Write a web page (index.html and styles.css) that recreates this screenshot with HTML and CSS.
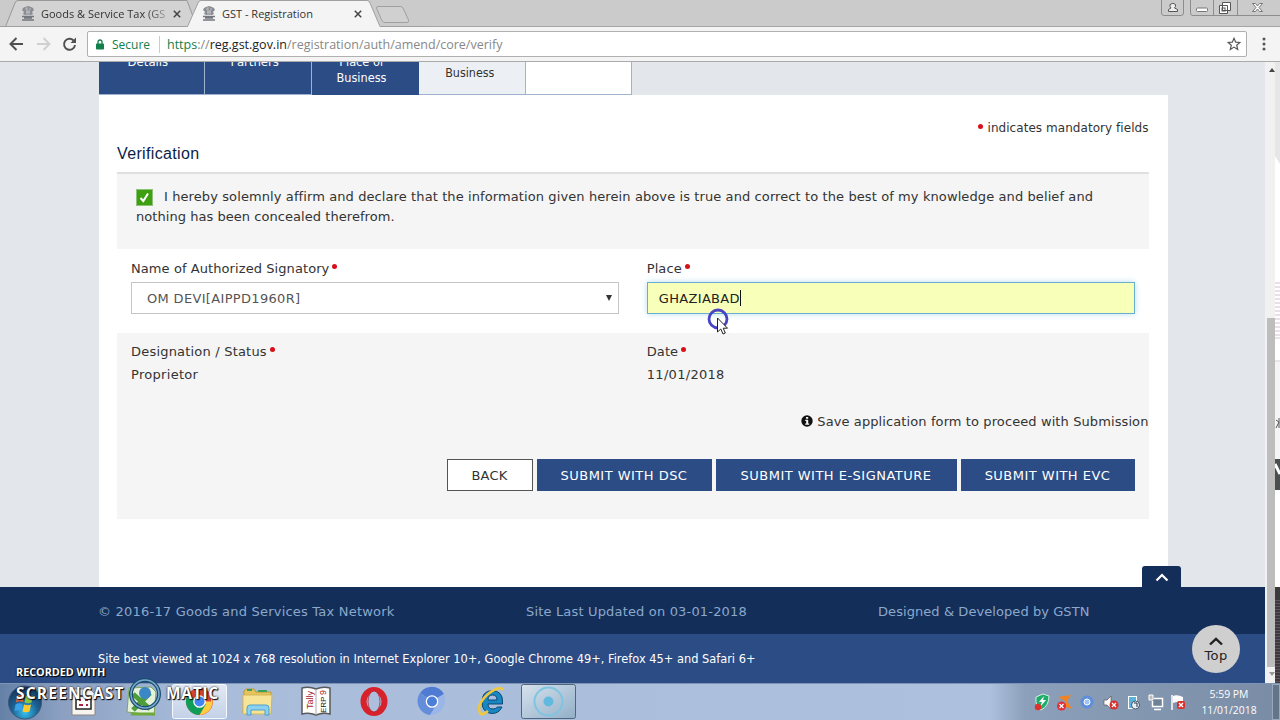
FILE: index.html
```html
<!DOCTYPE html>
<html lang="en">

<head>
    <meta charset="UTF-8" />
    <meta name="viewport" content="width=device-width, initial-scale=1.0" />
    <title>GST - Registration</title>
    <link rel="stylesheet" href="styles.css">
</head>

<body>
    <!-- shared symbols -->
    <svg class="defs" width="0" height="0">
        <symbol id="emblem" viewBox="0 0 14 15">
            <path d="M2 2 L4 1 L7 0 L10 1 L12 2 L13 4 L11 6 L12 8 L10 9 L4 9 L2 8 L3 6 L1 4 Z" fill="#8a8d93" />
            <path d="M4 3h2M8 3h2M5 6h4M6 1v8M8 4v5" stroke="#c9cbcf" stroke-width=".8" />
            <path d="M1 10.500h12M3 12h8M1 14h12" stroke="#74777d" stroke-width="1.400" />
        </symbol>
        <symbol id="close" viewBox="0 0 8 8">
            <path d="M.8 .8 L7.200 7.200 M7.200 .8 L.8 7.200" stroke="#444" stroke-width="1.500" />
        </symbol>
    </svg>

    <div class="tab-strip">
        <svg class="tab-shapes" width="430" height="27" viewBox="0 0 430 27">
            <path d="M5.500 26.500 L15 3 Q16 .5 18 .5 H187 L197 27 Z" fill="#d3d3d3" stroke="#999" />
            <path d="M0 26.500 H187.500 L198 3 Q199 .5 201 .5 H367 Q369 .5 370 3 L380 26.500 H430 V28 H0 Z" fill="#f4f4f4" stroke="#a0a0a0" />
            <path d="M376.500 8 Q376.500 6.500 378 6.500 H400 Q402 6.500 403 8 L408.500 20 Q409 22.500 407 22.500 H385 Q383 22.500 382 21 Z" fill="#d0d0d0" stroke="#a0a0a0" />
        </svg>
        <div class="tab tab-first">
            <svg class="emblem"><use href="#emblem" /></svg>
            <span class="tab-title tab-fade">Goods &amp; Service Tax (GS</span>
            <svg class="close"><use href="#close" /></svg>
        </div>
        <div class="tab tab-active">
            <svg class="emblem"><use href="#emblem" /></svg>
            <span class="tab-title">GST - Registration</span>
            <svg class="close"><use href="#close" /></svg>
        </div>
        <svg class="window-buttons" width="120" height="17" viewBox="0 0 120 17" fill="none">
            <path d="M1.500 0 V13 Q1.500 15.500 4 15.500 H21 Q23.500 15.500 23.500 13 V0 M30.500 0 V13 Q30.500 15.500 33 15.500 H120 M53.500 0 V15 M77.500 0 V15" stroke="#8d8d8d" />
            <path d="M8.500 11.500 V9.500 L11 8 Q9.500 6.500 10 4.500 Q13 2 15.500 4.500 Q16 6.500 14.500 8 L17.500 9.500 V11.500 Z" fill="#eee" stroke="#555" />
            <rect x="36.500" y="8" width="11" height="3.500" rx="1" fill="#fff" stroke="#777" />
            <path d="M62.500 2.500 h8 v8 h-8 Z M59.500 5.500 h8 v8 h-8 Z" fill="#fff" stroke="#555" />
            <rect x="62" y="8" width="3" height="3" stroke="#555" />
            <path d="M92.500 3.500 h3 l2 2.500 l2-2.500 h3 l-3.500 4 l3.500 4 h-3 l-2-2.500 l-2 2.500 h-3 l3.500-4 Z" fill="#fff" stroke="#777" />
        </svg>
    </div>

    <div class="toolbar">
        <svg class="nav-icons" width="78" height="24" viewBox="0 0 78 24" fill="none" stroke-width="2">
            <path d="M23 12 H11 M16.500 6 L10.500 12 L16.500 18" stroke="#505050" />
            <path d="M37 12 H49 M43.500 6 L49.500 12 L43.500 18" stroke="#d0d0d0" />
            <path d="M73.500 8.500 A5.500 5.500 0 1 0 75 13" stroke="#505050" />
            <path d="M76 5.500 V11 H70.500 Z" fill="#505050" />
        </svg>
        <div class="omnibox">
            <svg class="lock" width="8" height="11" viewBox="0 0 8 11"><path d="M2 5 V3 Q2 1 4 1 Q6 1 6 3 V5" fill="none" stroke="#12804a" stroke-width="1.300" /><rect y="4.500" width="8" height="6" rx=".8" fill="#12804a" /></svg>
            <span class="secure">Secure</span>
            <span class="url"><span class="scheme">https</span>://<b>reg.gst.gov.in</b>/registration/auth/amend/core/verify</span>
            <svg class="star" width="14" height="14" viewBox="0 0 14 14"><path d="M7 1.300 L8.700 5.200 L12.900 5.500 L9.700 8.200 L10.700 12.400 L7 10.100 L3.300 12.400 L4.300 8.200 L1.100 5.500 L5.300 5.200 Z" fill="none" stroke="#555" stroke-width="1.200" /></svg>
        </div>
        <svg class="menu-dots" width="4" height="14" viewBox="0 0 4 14" fill="#555"><circle cx="2" cy="2" r="1.500" /><circle cx="2" cy="7" r="1.500" /><circle cx="2" cy="12" r="1.500" /></svg>
    </div>

    <div class="viewport">
        <div class="page">
            <div class="container">
                <div class="steps">
                    <div class="step done">Details</div>
                    <div class="step done">Partners</div>
                    <div class="step done last">Place of<br>Business</div>
                    <div class="step next">Business</div>
                    <div class="step current"></div>
                </div>
                <div class="content">
                    <p class="mandatory"><i class="dot"></i>indicates mandatory fields</p>
                    <h4>Verification</h4>
                    <div class="declaration">
                        <span class="checkbox"><svg width="15" height="15" viewBox="0 0 15 15"><path d="M3.500 8 L6.300 11 L11 3.500" fill="none" stroke="#fff" stroke-width="2" /></svg></span><span class="line-one">I hereby solemnly affirm and declare that the information given herein above is true and correct to the best of my knowledge and belief and</span><br>
                        <span class="line-two">nothing has been concealed therefrom.</span>
                    </div>
                    <div class="row fields">
                        <div class="col">
                            <label>Name of Authorized Signatory<i class="dot"></i></label>
                            <div class="control select">OM DEVI[AIPPD1960R]<i class="caret"></i></div>
                        </div>
                        <div class="col">
                            <label>Place<i class="dot"></i></label>
                            <div class="control focused">GHAZIABAD<i class="cursor"></i></div>
                        </div>
                    </div>
                    <div class="summary">
                        <div class="row">
                            <div class="col">
                                <label class="spaced">Designation / Status<i class="dot"></i></label>
                                <p class="value">Proprietor</p>
                            </div>
                            <div class="col">
                                <label>Date<i class="dot"></i></label>
                                <p class="value">11/01/2018</p>
                            </div>
                        </div>
                        <p class="save-note"><svg width="12" height="12" viewBox="0 0 12 12"><circle cx="6" cy="6" r="5.700" fill="#111" /><path d="M5 2 h2.200 v1.800 H5 Z M4.200 4.800 h3 v3.700 h1 v1.300 H4.200 V8.500 h1 V6 h-1 Z" fill="#f5f5f5" /></svg><span>Save application form to proceed with Submission</span></p>
                        <div class="buttons">
                            <button class="btn back">BACK</button>
                            <button class="btn dsc">SUBMIT WITH DSC</button>
                            <button class="btn esign">SUBMIT WITH E-SIGNATURE</button>
                            <button class="btn evc">SUBMIT WITH EVC</button>
                        </div>
                    </div>
                </div>
            </div>
            <div class="footer">
                <span class="copyright">© 2016-17 Goods and Services Tax Network</span>
                <span class="updated">Site Last Updated on 03-01-2018</span>
                <span class="designed">Designed &amp; Developed by GSTN</span>
                <div class="footer-toggle"><svg width="14" height="9" viewBox="0 0 14 9"><path d="M1.500 7.500 L7 2 L12.500 7.500" fill="none" stroke="#fff" stroke-width="2.200" /></svg></div>
            </div>
            <div class="subfooter">
                <span>Site best viewed at 1024 x 768 resolution in Internet Explorer 10+, Google Chrome 49+, Firefox 45+ and Safari 6+</span>
            </div>
            <div class="to-top">
                <svg width="14" height="9" viewBox="0 0 14 9"><path d="M1 7.500 L7 1.800 L13 7.500" fill="none" stroke="#222" stroke-width="2.400" /></svg>
                <span>Top</span>
            </div>
        </div>
        <div class="scrollbar">
            <i class="arrow-up"></i>
            <i class="thumb"></i>
            <i class="arrow-down"></i>
        </div>
        <svg class="edge" width="5" height="621" viewBox="0 0 5 621" preserveAspectRatio="none">
            <rect width="5" height="621" fill="#fff" />
            <path d="M0 0 H5 V102 L0 94 Z" fill="#e6e6e6" />
            <path d="M2.500 220 V276" stroke="#eadfe6" stroke-width="5" stroke-dasharray="2 2" />
            <rect y="300" width="5" height="97" fill="#f5f5f5" />
            <path d="M0 276 H5 M0 299 H5" stroke="#d5c6ce" />
            <path d="M1 358 L4 360 L1 366 M4 356 V366" stroke="#555" fill="none" />
            <rect y="397" width="5" height="31" fill="#4a4e4d" />
            <path d="M0 402 L5 412" stroke="#fff" stroke-width="3" />
            <rect y="525" width="5" height="96" fill="#3b3b3b" />
            <path d="M2.500 538 V621" stroke="#655167" stroke-width="5" stroke-dasharray="1 2" />
        </svg>
    </div>

    <div class="taskbar">
        <svg width="600" height="37" viewBox="0 0 600 37">
            <defs>
                <radialGradient id="orb" cx=".5" cy=".8" r=".8"><stop offset="0" stop-color="#35c1ee" /><stop offset=".5" stop-color="#1c5f92" /><stop offset="1" stop-color="#173250" /></radialGradient>
                <linearGradient id="active" x2="0" y2="1"><stop offset="0" stop-color="#e2e9f4" /><stop offset="1" stop-color="#c3d1e7" /></linearGradient>
                <linearGradient id="open" x2="1" y2="1"><stop offset="0" stop-color="#d7e2ed" /><stop offset="1" stop-color="#91afc7" /></linearGradient>
            </defs>
            <!-- start orb -->
            <circle cx="25" cy="18.500" r="16.500" fill="url(#orb)" stroke="#3c5878" />
            <path d="M17 12 q4-3 7-1 l-1 7 q-4-1.500-7 .5Z" fill="#f0662f" />
            <path d="M26 11.500 q4 2 7 0 l-1.500 7 q-3 1.500-7 0Z" fill="#8cc63e" />
            <path d="M15.500 20.500 q3.500-2 7-.5 l-1 7 q-3.500-1.500-7 .5Z" fill="#3aa0e8" />
            <path d="M24 20.500 q4 1.500 7 0 l-1.500 7 q-3.500 1.500-7 0Z" fill="#fdc92c" />
            <!-- notepad -->
            <path d="M72 5 H90 L95 10 V31 H72 Z" fill="#f7f4ef" stroke="#8b8582" />
            <rect x="76" y="12" width="15" height="13" fill="#fff" stroke="#222" stroke-width="1.500" />
            <path d="M79 16h2M85 16h3M79 21h4M86 21h2" stroke="#a24" stroke-width="2" />
            <!-- spreadsheet -->
            <path d="M129 4 L151 3 L156 8 L154 31 L127 28 Z" fill="#e5f2d9" stroke="#7ba85a" />
            <path d="M133 10 L150 25 M150 9 L133 26" stroke="#4f9c3b" stroke-width="5" />
            <path d="M131 30 H155" stroke="#6fa93c" stroke-width="3" />
            <!-- chrome -->
            <rect x="172.500" y=".5" width="54" height="34" rx="2" fill="url(#active)" stroke="#f5f8fc" />
            <circle cx="199.500" cy="17.500" r="13.500" fill="#db4437" />
            <path d="M199.500 17.500 L187.800 10.750 A13.500 13.500 0 0 0 199.500 31 L206 20.500 Z" fill="#0f9d58" />
            <path d="M199.500 17.500 H211 V11 A13.500 13.500 0 0 1 199.500 31 L206 20 Z" fill="#ffcd40" />
            <circle cx="199.500" cy="17.500" r="6.300" fill="#fff" /><circle cx="199.500" cy="17.500" r="5" fill="#4285f4" />
            <!-- explorer -->
            <path d="M244 7 L246 5 H254 L256 8 H271 V29 H243 Z" fill="#e5c45b" stroke="#bb983b" />
            <path d="M247 6 h5 M258 7 h9" stroke="#3aa05b" stroke-width="2" />
            <path d="M243 11 H272 L271 30 H243 Z" fill="#f8e496" stroke="#d4b559" />
            <path d="M247 31 V24 Q247 21 250 21 H266 Q269 21 269 24 V31 H265 V26 H251 V31 Z" fill="#8bd0f1" stroke="#4ba1cd" />
            <!-- tally -->
            <path d="M302 4 Q309 2 316 5 Q323 2 330 4 V30 Q323 28 316 31 Q309 28 302 30 Z" fill="#fff" stroke="#5a5a5a" stroke-width="1.500" />
            <path d="M316 5 V31" stroke="#aaa" />
            <text class="tally-red" transform="translate(313 25) rotate(-90)">Tally</text>
            <text class="tally-black" transform="translate(326 29) rotate(-90)">ERP</text>
            <text class="tally-nine" transform="translate(326 11) rotate(-90)">9</text>
            <!-- opera -->
            <ellipse cx="374" cy="17.500" rx="10.500" ry="11.500" fill="none" stroke="#d8222b" stroke-width="6" />
            <ellipse cx="374" cy="17.500" rx="6" ry="10.500" fill="#adbfdc" stroke="#b3131d" stroke-width=".7" />
            <!-- chromium -->
            <path d="M432 17 L420 9 A14 14 0 0 1 444 10 Z" fill="#4f7cd2" />
            <path d="M432 17 L420 9 A14 14 0 0 0 430 31 L438 19 Z" fill="#638cda" />
            <path d="M432 17 L444 10 Q447 20 441 27 Q436 31 430 31 L438 19 Z" fill="#9ab6e8" />
            <circle cx="432" cy="17.500" r="6.300" fill="#fff" /><circle cx="432" cy="17.500" r="5" fill="#4b7ed8" />
            <!-- internet explorer -->
            <path d="M501 20 H488 Q488 25 493 25 Q496 25 497.500 23 H502 Q499 29.500 492 29.500 Q482 29 482 18 Q482 7 492 6.500 Q503 7 502.500 18 V20 Z M488 16 H497 Q497 11 492.500 11 Q488 11 488 16 Z" fill="#1787c4" stroke="#0d4772" fill-rule="evenodd" />
            <path d="M503 6 Q500 1 488 10 Q476 21 480 29 Q482 32 488 27" fill="none" stroke="#f0c83c" stroke-width="2.500" />
            <!-- recorder -->
            <rect x="521.500" y=".5" width="54" height="34" rx="2" fill="url(#open)" stroke="#50657f" />
            <circle cx="548.500" cy="17.500" r="14" fill="none" stroke="#7fc4e2" stroke-width="2" /><circle cx="548.500" cy="17.500" r="5" fill="#62b9df" />
        </svg>
        <svg class="tray" width="160" height="37" viewBox="0 0 160 37">
            <path d="M6 13 L13 10 L19 12 Q19 22 11 26 Q5 23 6 13Z" fill="#1fae6a" stroke="#d6eee1" /><path d="M14 12 L9 18 H12 L10 23 L16 16 H13 Z" fill="#fff" /><circle cx="8" cy="23" r="3.200" fill="#e0322c" />
            <path d="M28 13 L41 11 L37 17 L42 25 L36 23 L35 17 Z" fill="#f58220" /><circle cx="31.500" cy="22" r="4.500" fill="#df3038" /><path d="M29.500 20l4 4M33.500 20l-4 4" stroke="#fff" stroke-width="1.200" />
            <circle cx="57" cy="18" r="6.500" fill="#5f8edb" /><circle cx="57" cy="18" r="3" fill="#a0c2fa" stroke="#fff" />
            <path d="M74 16 H77 L81 12 V25 L77 21 H74 Z" fill="#fff" stroke="#555" stroke-width=".7" /><circle cx="84" cy="21" r="4.500" fill="#d9302c" /><path d="M82 19l4 4M86 19l-4 4" stroke="#fff" stroke-width="1.300" />
            <rect x="98.500" y="12.500" width="8" height="12" fill="#58b4dc" stroke="#fff" /><circle cx="105.500" cy="21" r="4" fill="#e8f1f8" stroke="#456" /><path d="M104 19h3v4" stroke="#234" fill="none" />
            <path d="M124 14.500 H132.500 V22.500 H122.500 V17 M124 25.500 H131" fill="#6d8197" stroke="#fff" stroke-width="1.500" /><path d="M119 11 h4 v5 h-4 Z" fill="#bbb" stroke="#fff" />
            <path d="M142 11 V26" stroke="#fff" stroke-width="1.500" /><path d="M143 12 Q147 10 153 13 V19 Q147 17 143 19 Z" fill="#fff" /><rect x="147" y="17" width="8" height="8" rx="2" fill="#d9302c" /><path d="M149 19l4 4M153 19l-4 4" stroke="#fff" stroke-width="1.300" />
        </svg>
        <div class="clock"><span class="time">5:59 PM</span><span class="date">11/01/2018</span></div>
        <i class="show-desktop"></i>
    </div>

    <!-- recorder watermark over the lower left corner -->
    <div class="watermark">
        <span class="recorded">RECORDED WITH</span>
        <div class="brand">
            <span class="screencast">SCREENCAST</span>
            <svg width="34" height="34" viewBox="0 0 34 34"><circle cx="17" cy="17" r="14" fill="none" stroke="#1d4c70" stroke-width="4" /><circle cx="17" cy="17" r="14" fill="none" stroke="#77a9cb" stroke-width="1.500" /><circle cx="17" cy="16" r="6" fill="#3c87c5" /></svg>
            <span class="matic">MATIC</span>
        </div>
    </div>

    <!-- mouse pointer with click ring -->
    <svg class="pointer" width="24" height="30" viewBox="0 0 24 30">
        <circle cx="11" cy="11" r="9" fill="none" stroke="#4a43c4" stroke-width="2.800" />
        <path d="M10.500 10 V24 L13.800 21 L16 26 L18.300 25 L16.200 20.200 H20.500 Z" fill="#fff" stroke="#222" />
    </svg>
</body>

</html>
```
FILE: styles.css
```css
* {
    box-sizing: border-box;
}

body {
    margin: 0;
    width: 1280px;
    height: 720px;
    overflow: hidden;
    display: flex;
    flex-direction: column;
    font-family: "DejaVu Sans", Verdana, sans-serif;
    font-size: 13px;
    color: #333;
    white-space: nowrap;
}

p,
h4 {
    margin: 0;
    font-weight: normal;
}

svg {
    flex: none;
    display: block;
}

.defs {
    position: absolute;
}

/* browser frame */
.tab-strip {
    position: relative;
    flex: none;
    height: 27px;
    display: flex;
    background: #cbcbcb;
    border-bottom: 1px solid #a5a5a5;
    font-family: "Open Sans", sans-serif;
    font-size: 11px;
    color: #333;
}

.tab-shapes {
    position: absolute;
    left: 0;
    top: 0;
}

.tab {
    position: relative;
    display: flex;
    align-items: center;
    height: 27px;
    padding-left: 21px;
    width: 182px;
}

.tab-active {
    padding-left: 20px;
    width: 200px;
}

.emblem {
    width: 14px;
    height: 15px;
    margin-right: 6px;
}

.tab-title {
    width: 128px;
}

.tab-active .tab-title {
    width: 132px;
}

.tab-fade {
    -webkit-mask-image: linear-gradient(to right, #000 82%, rgba(0, 0, 0, 0.2));
    mask-image: linear-gradient(to right, #000 82%, rgba(0, 0, 0, 0.2));
}

.close {
    width: 8px;
    height: 8px;
    margin-left: 4px;
}

.tab-active .close {
    margin-left: auto;
    margin-right: 20px;
}

.window-buttons {
    margin-left: auto;
}

.toolbar {
    flex: none;
    height: 35px;
    display: flex;
    align-items: center;
    background: #f4f4f4;
    border-bottom: 1px solid #aaa;
}

.nav-icons {
    margin-right: 9px;
}

.omnibox {
    width: 1160px;
    height: 26px;
    display: flex;
    align-items: center;
    padding-left: 8px;
    background: #fff;
    border: 1px solid #b0b0b0;
    border-radius: 2px;
    font-family: "Open Sans", sans-serif;
    font-size: 12px;
    color: #888;
}

.secure {
    width: 48px;
    margin-left: 8px;
    border-right: 1px solid #ccc;
    color: #12804a;
}

.scheme {
    color: #12804a;
}

.url {
    margin-left: 7px;
    font-size: 12.5px;
}

.url b {
    font-weight: normal;
    color: #222;
}

.star {
    margin-left: auto;
    margin-right: 5px;
}

.menu-dots {
    margin-left: 15px;
}

/* page */
.viewport {
    flex: none;
    height: 621px;
    display: flex;
}

.page {
    position: relative;
    width: 1265px;
    background: #e3e6eb;
}

.container {
    width: 1069px;
    height: 525px;
    margin-left: 98.5px;
    display: flex;
    flex-direction: column;
}

.steps {
    flex: none;
    height: 33px;
    display: flex;
    align-items: flex-end;
    overflow: hidden;
    text-align: center;
    line-height: 16px;
    font-family: "DejaVu Sans Condensed", "DejaVu Sans", sans-serif;
}

.step {
    width: 106.8px;
    height: 60px;
    display: flex;
    flex-direction: column;
    justify-content: flex-end;
    padding: 0 7px 24px 0;
    border-right: 1px solid #9fb3cf;
    border-bottom: 1px solid #9fb3cf;
}

.done {
    background: #2b4c85;
    color: #fff;
}

.last {
    padding-bottom: 8px;
    display: block;
    padding-top: 19px;
    border-color: #2b4c85;
    font-size: 12.6px;
}

.next {
    padding: 0 4px 13px 0;
    background: #eceff3;
    font-size: 12.4px;
}

.current {
    background: #fff;
}

.content {
    flex: 1;
    padding: 24px 19px 0 18.5px;
    background: #fff;
}

.dot {
    display: inline-block;
    width: 5px;
    height: 5px;
    border-radius: 50%;
    background: #d8101a;
    vertical-align: 4px;
    margin-left: 3px;
}

.mandatory {
    display: flex;
    justify-content: flex-end;
    line-height: 18px;
    font-size: 12px;
    letter-spacing: 0.05px;
}

.mandatory .dot {
    margin: 5px 5px 0 0;
}

h4 {
    height: 35px;
    padding-top: 6px;
    line-height: 22px;
    font-family: "Liberation Sans", Arial, sans-serif;
    font-size: 16px;
    letter-spacing: 0.35px;
    color: #0b1e4b;
}

.declaration {
    height: 77px;
    padding: 13px 0 0 19px;
    border-top: 2px solid #dfdfdf;
    background: #f5f5f5;
    line-height: 19.5px;
}

.line-one {
    letter-spacing: 0.1px;
}

.line-two {
    letter-spacing: 0.05px;
}

.checkbox {
    display: inline-block;
    width: 17px;
    height: 17px;
    margin-right: 11px;
    border: 1px solid #8cc27c;
    background: #3ea010;
    vertical-align: -5px;
    line-height: 0;
}

.row {
    display: flex;
    padding: 0 14px;
}

.col {
    width: 488px;
}

.col + .col {
    margin-left: 28px;
}

.fields {
    padding-top: 10px;
    height: 84px;
}

label {
    display: block;
    height: 23px;
    line-height: 20px;
    letter-spacing: 0.08px;
}

.spaced {
    letter-spacing: 0.2px;
}

.control {
    display: flex;
    align-items: center;
    height: 32px;
    padding-left: 15px;
    border: 1px solid #c5c5c5;
    background: #fff;
    color: #555;
    letter-spacing: 0.33px;
}

.select .caret {
    margin-left: auto;
    margin-right: 6px;
    border: 3px solid transparent;
    border-top: 6px solid #333;
    border-bottom: 0;
}

.focused {
    padding-left: 11px;
    border-color: #66afd0;
    background: #f8ffb9;
    color: #222;
    box-shadow: 0 0 6px #b7dcf0;
}

.cursor {
    width: 1px;
    height: 16px;
    background: #111;
}

.summary {
    height: 186px;
    padding-top: 9px;
    background: #f5f5f5;
}

.value {
    line-height: 20px;
    letter-spacing: 0.3px;
}

.save-note {
    display: flex;
    align-items: center;
    justify-content: flex-end;
    gap: 4px;
    height: 20px;
    margin-top: 26px;
    letter-spacing: 0.1px;
}

.buttons {
    display: flex;
    justify-content: flex-end;
    gap: 4px;
    padding: 28px 14px 0 0;
}

.btn {
    height: 32px;
    padding: 0;
    border: 1px solid #2b4c85;
    background: #2b4c85;
    color: #fff;
    font: inherit;
    letter-spacing: 0.48px;
}

.back {
    width: 86px;
    border-color: #555;
    background: #fff;
    color: #333;
    letter-spacing: 0.2px;
}

.dsc {
    width: 175px;
}

.esign {
    width: 241px;
}

.evc {
    width: 174px;
}

.footer {
    position: relative;
    display: flex;
    height: 47px;
    padding-left: 98px;
    background: #142e5a;
    color: #8ba9cb;
    line-height: 49px;
}

.copyright {
    width: 428px;
    letter-spacing: 0.21px;
}

.updated {
    width: 352px;
    letter-spacing: 0.17px;
}

.designed {
    letter-spacing: 0.07px;
}

.footer-toggle {
    position: absolute;
    left: 1142px;
    top: -21px;
    width: 39px;
    height: 22px;
    display: flex;
    align-items: center;
    justify-content: center;
    border-radius: 3px 3px 0 0;
    background: #142e5a;
}

.subfooter {
    height: 49px;
    padding-left: 98px;
    background: #2b4c85;
    color: #fff;
    font-size: 11.4px;
    line-height: 50px;
}

.to-top {
    position: absolute;
    left: 1192px;
    top: 563px;
    width: 48px;
    height: 48px;
    display: flex;
    flex-direction: column;
    align-items: center;
    padding-top: 12px;
    border-radius: 50%;
    background: #cfcfcf;
    color: #222;
    line-height: 20px;
    letter-spacing: 0.4px;
}

.scrollbar {
    width: 10px;
    display: flex;
    flex-direction: column;
    align-items: flex-end;
    background: #f1f1f1;
}

.arrow-up {
    margin: 6px 0 0;
    border: 3px solid transparent;
    border-top: 0;
    border-bottom: 4px solid #444;
}

.thumb {
    width: 8px;
    height: 349px;
    margin-top: 246px;
    background: #bdbdbd;
}

.arrow-down {
    margin-top: 5px;
    border: 3px solid transparent;
    border-top: 4px solid #999;
    border-bottom: 0;
}

/* desktop taskbar */
.taskbar {
    flex: none;
    height: 37px;
    display: flex;
    border-top: 1px solid #7e94b3;
    background: linear-gradient(to right, #6580a6 0, #8ba0c1 60px, #a9bddb 200px, #adc1df 990px, #8ca0bb 1025px, #7a8ca5 1280px);
}

.tally-red,
.tally-black,
.tally-nine {
    font-family: "Liberation Sans", Arial, sans-serif;
    font-size: 9px;
    fill: #a51c2c;
}

.tally-black {
    font-size: 8px;
    fill: #222;
}

.tray {
    margin-left: 430px;
}

.clock {
    width: 78px;
    display: flex;
    flex-direction: column;
    align-items: center;
    padding-top: 2px;
    font-family: "Open Sans", sans-serif;
    font-size: 10.4px;
    line-height: 16px;
    color: #fff;
}

.show-desktop {
    width: 8px;
    margin-left: auto;
    border: 1px solid #99a8ba;
    background: #657589;
}

.watermark {
    position: absolute;
    left: 16px;
    top: 664px;
    font-family: "Open Sans", sans-serif;
    font-weight: bold;
    color: #fff;
    text-shadow: 1px 1px 1px #000, 0 0 2px #000;
}

.recorded {
    display: block;
    font-size: 10.8px;
    line-height: 15px;
}

.brand {
    display: flex;
    align-items: center;
    height: 30px;
    font-size: 15.5px;
    line-height: 26px;
}

.screencast {
    width: 112px;
    letter-spacing: 1.2px;
    padding-bottom: 2px;
}

.matic {
    margin-left: 4px;
    letter-spacing: 0.7px;
    padding-bottom: 2px;
}

.pointer {
    position: absolute;
    left: 707px;
    top: 308px;
}
```
